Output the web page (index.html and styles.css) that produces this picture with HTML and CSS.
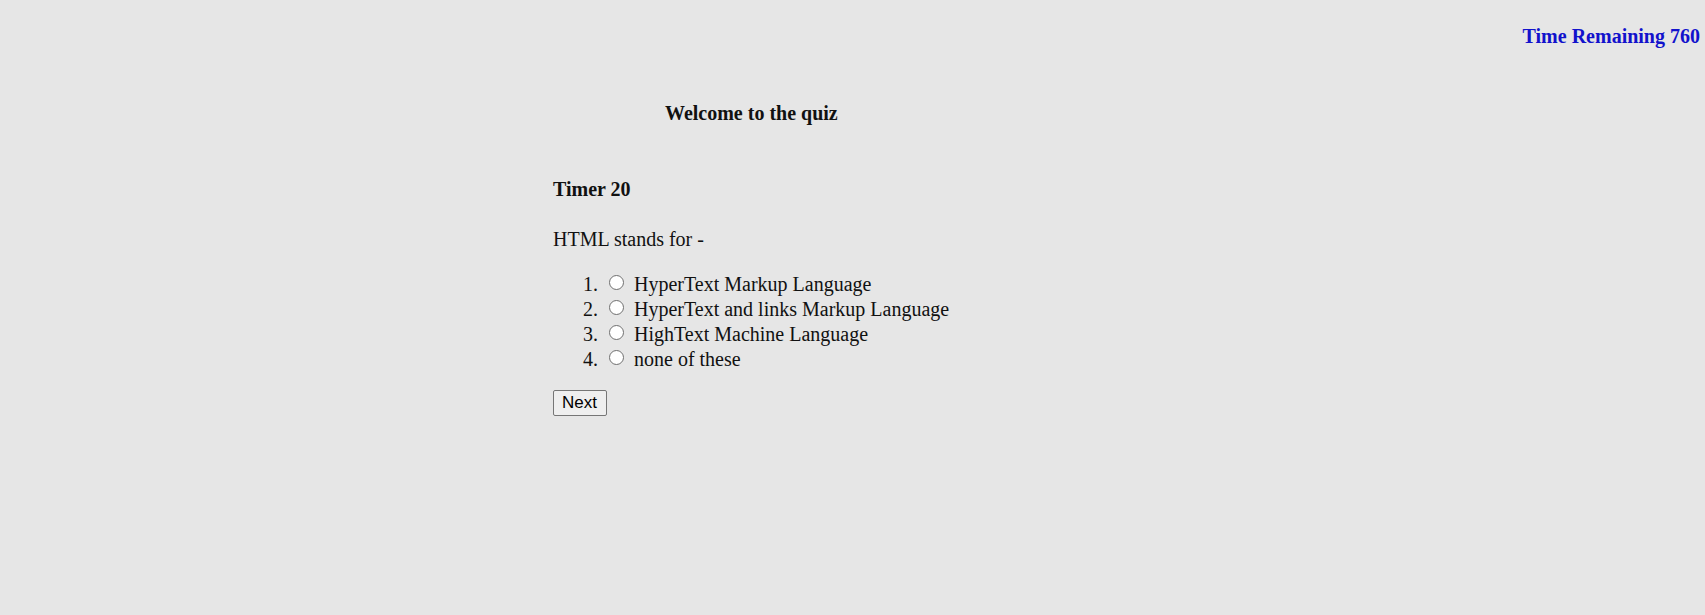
FILE: index.html
```html
<!DOCTYPE html>
<html>
<head>
<meta charset="utf-8">
<link rel="stylesheet" href="styles.css">
</head>
<body>
<div class="timebar">Time Remaining 760</div>
<div class="quiz">
  <div class="welcome">Welcome to the quiz</div>
  <div class="timer">Timer 20</div>
  <div class="question">HTML stands for -</div>
  <ol class="options">
    <li><input type="radio" name="q" class="radio"> HyperText Markup Language</li>
    <li><input type="radio" name="q" class="radio"> HyperText and links Markup Language</li>
    <li><input type="radio" name="q" class="radio"> HighText Machine Language</li>
    <li><input type="radio" name="q" class="radio"> none of these</li>
  </ol>
  <button class="next">Next</button>
</div>
</body>
</html>
```

FILE: styles.css
```css
html, body {
  margin: 0;
  padding: 0;
}
body {
  background: #e6e6e6;
  font-family: "Liberation Serif", "Times New Roman", serif;
  font-size: 20px;
  line-height: 25px;
  color: #111;
  width: 1705px;
  height: 615px;
}
.timebar {
  padding-top: 24px;
  padding-right: 5px;
  text-align: right;
  font-weight: bold;
  color: #1212cc;
}
.quiz {
  margin-left: 553px;
  padding-top: 52px;
}
.welcome {
  font-weight: bold;
  padding-left: 112px;
}
.timer {
  font-weight: bold;
  margin-top: 51px;
}
.question {
  margin-top: 25px;
}
.options {
  margin: 20px 0 0 0;
  padding-left: 50px;
}
.options li {
  line-height: 25px;
}
.radio {
  appearance: none;
  -webkit-appearance: none;
  width: 15px;
  height: 15px;
  margin: 0 5px 0 6px;
  border: 1px solid #6f6f6f;
  border-radius: 50%;
  background: #fff;
  box-sizing: border-box;
  vertical-align: 1px;
}
.next {
  margin-top: 18px;
  font-family: "Liberation Sans", Arial, sans-serif;
  font-size: 17px;
  line-height: 20px;
  padding: 2px 9px 2px 8px;
  border: 1px solid #767676;
  border-radius: 2px;
  background: #efefef;
  color: #000;
}
```
